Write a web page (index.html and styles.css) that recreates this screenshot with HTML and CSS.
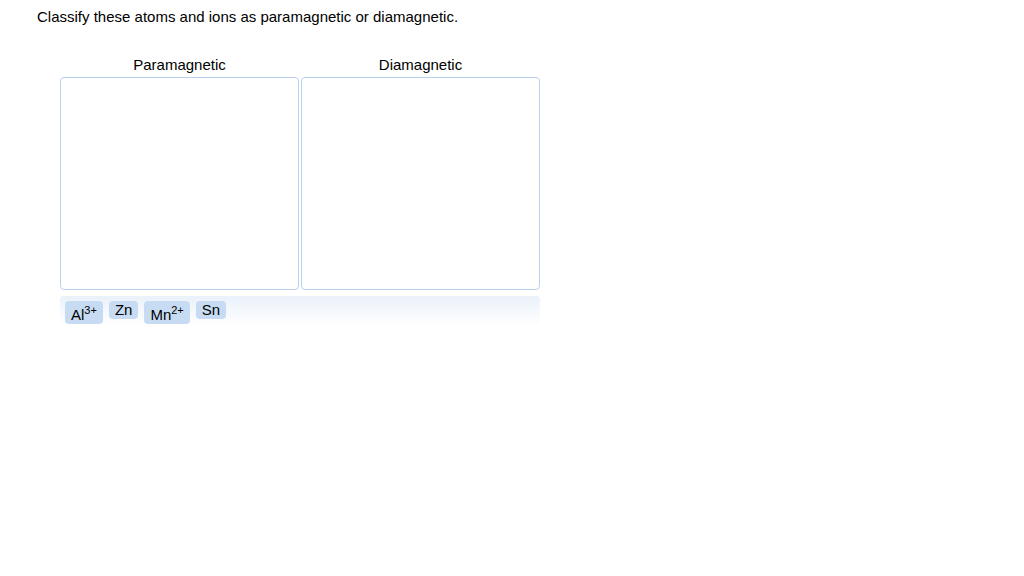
FILE: index.html
```html
<!DOCTYPE html>
<html lang="en">
<head>
    <meta charset="UTF-8">
    <title>Classify atoms and ions</title>
    <link rel="stylesheet" href="styles.css">
</head>
<body>
    <p class="prompt">Classify these atoms and ions as paramagnetic or diamagnetic.</p>

    <div class="sorter">
        <div class="bins">
            <div class="bin">
                <div class="bin-label">Paramagnetic</div>
                <div class="bin-box"></div>
            </div>
            <div class="bin">
                <div class="bin-label">Diamagnetic</div>
                <div class="bin-box"></div>
            </div>
        </div>

        <div class="tray">
            <span class="chip">Al<sup>3+</sup></span>
            <span class="chip">Zn</span>
            <span class="chip">Mn<sup>2+</sup></span>
            <span class="chip">Sn</span>
        </div>
    </div>
</body>
</html>
```

FILE: styles.css
```css
body {
    font-family: 'Liberation Sans', Arial, sans-serif;
    background-color: #ffffff;
    color: #000;
    margin: 0;
    padding: 0;
}

.prompt {
    margin: 0;
    padding: 8px 0 0 37px;
    font-size: 15px;
    line-height: 18px;
}

.sorter {
    margin: 30px 0 0 60px;
    width: 480px;
}

.bins {
    display: flex;
    gap: 2px;
}

.bin {
    flex: 1;
}

.bin-label {
    text-align: center;
    font-size: 15px;
    line-height: 18px;
    margin-bottom: 3px;
}

.bin-box {
    height: 211px;
    border: 1px solid #b9d1ef;
    border-radius: 4px;
}

.tray {
    margin-top: 6px;
    padding: 5px 5px 0;
    height: 24px;
    display: flex;
    align-items: flex-start;
    gap: 6px;
    border-radius: 4px;
    background: linear-gradient(to bottom, #eaf1fa, #ffffff);
}

.chip {
    background-color: #c7dcf3;
    border-radius: 4px;
    font-size: 15px;
    line-height: 18px;
    padding: 0 6px;
}

.chip sup {
    font-size: 11px;
    vertical-align: 0;
    position: relative;
    top: -6px;
    line-height: 0;
}

/* charged species sit lower so the superscript fits inside */
.chip:has(sup) {
    padding: 5px 6px 0;
}
```
